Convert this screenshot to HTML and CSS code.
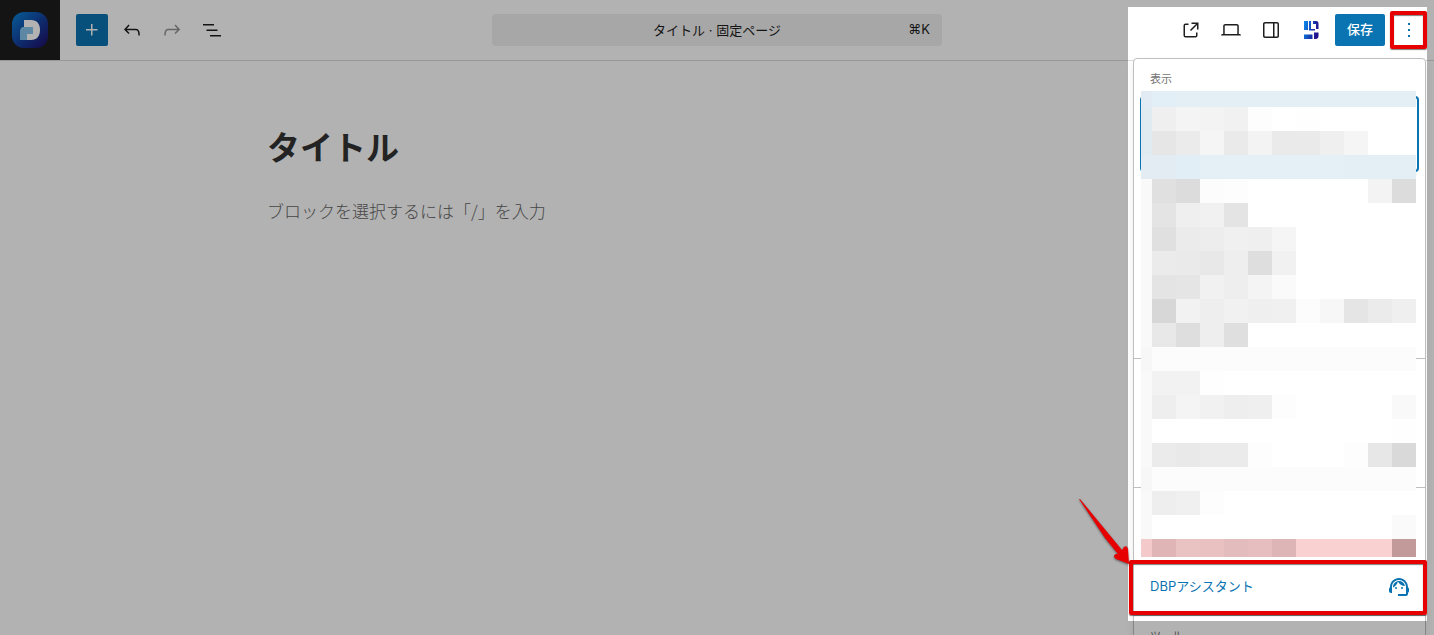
FILE: index.html
```html
<!DOCTYPE html>
<html lang="ja">
<head>
    <meta charset="UTF-8">
    <meta name="viewport" content="width=device-width, initial-scale=1.0">
    <title>タイトル</title>
    <link rel="stylesheet" href="styles.css">
</head>
<body>
    <div class="editor">
        <!-- Top toolbar -->
        <header class="header">
            <div class="header-left">
                <a class="site-logo" href="#" aria-label="Home">
                    <svg width="36" height="36" viewBox="0 0 36 36">
                        <defs>
                            <linearGradient id="logo-bg" x1="0" y1="0" x2="1" y2="1">
                                <stop offset="0" stop-color="#0a86d8"/>
                                <stop offset="0.5" stop-color="#1443a0"/>
                                <stop offset="1" stop-color="#220a66"/>
                            </linearGradient>
                        </defs>
                        <rect width="36" height="36" rx="12" fill="url(#logo-bg)"/>
                        <path d="M12 8h7c6 0 9 4 9 10s-3 10-9 10h-4v-6h6v-7h-9z" fill="#fff"/>
                        <path d="M12 15h9v7h-6v6H8v-8c0-3 1-5 4-5z" fill="#86c3ea"/>
                    </svg>
                </a>
                <div class="tools">
                    <button class="icon-btn primary" aria-label="Add">
                        <svg width="24" height="24" viewBox="0 0 24 24"><path d="M11 12.5V17.5H12.5V12.5H17.5V11H12.5V6H11V11H6V12.5H11Z"/></svg>
                    </button>
                    <button class="icon-btn" aria-label="Undo">
                        <svg width="24" height="24" viewBox="0 0 24 24"><path d="M18.3 11.7c-.6-.6-1.4-.9-2.3-.9H6.7l2.9-3.3-1.1-1-4.500 5L8.500 16l1-1-2.700-2.700H16c.5 0 .9.2 1.300.5 1 1 1 3.400 1 4.500v.3h1.500v-.2c0-1.500 0-4.300-1.500-5.700z"/></svg>
                    </button>
                    <button class="icon-btn" aria-label="Redo" disabled>
                        <svg width="24" height="24" viewBox="0 0 24 24"><path d="M15.600 6.500l-1.100 1 2.900 3.300H8c-.9 0-1.700.3-2.300.9-1.400 1.500-1.400 4.200-1.400 5.600v.2h1.500v-.3c0-1.100 0-3.500 1-4.500.3-.3.700-.5 1.300-.5h9.200L14.500 15l1.100 1.100 4.600-4.600-4.600-5z"/></svg>
                    </button>
                    <button class="icon-btn" aria-label="Document overview">
                        <svg width="24" height="24" viewBox="0 0 24 24"><path d="M3 6h11v1.500H3V6Zm3.500 5.500h11V13h-11v-1.500ZM21 17H10v1.500h11V17Z"/></svg>
                    </button>
                </div>
            </div>

            <button class="document-bar">
                <span></span>
                <span>タイトル · 固定ページ</span>
                <span class="shortcut">⌘K</span>
            </button>

            <div class="header-right">
                <button class="icon-btn" aria-label="View page">
                    <svg width="24" height="24" viewBox="0 0 24 24"><path d="M19.500 4.500h-7V6h4.440l-5.970 5.970 1.060 1.060L18 7.060v4.440h1.500v-7Zm-13 1a2 2 0 0 0-2 2v10a2 2 0 0 0 2 2h10a2 2 0 0 0 2-2v-3H17v3a.5.5 0 0 1-.5.5h-10a.5.5 0 0 1-.5-.5v-10a.5.5 0 0 1 .5-.5h3V5.500h-3Z"/></svg>
                </button>
                <button class="icon-btn" aria-label="Preview">
                    <svg width="24" height="24" viewBox="0 0 24 24"><path d="M20.500 16h-.7V8c0-1.100-.9-2-2-2H6.200c-1.100 0-2 .9-2 2v8h-.7c-.8 0-1.500.7-1.500 1.500h20c0-.8-.7-1.500-1.500-1.500zM5.700 8c0-.3.2-.5.500-.5h11.600c.3 0 .5.2.5.500v8H5.700V8z"/></svg>
                </button>
                <button class="icon-btn" aria-label="Settings">
                    <svg width="24" height="24" viewBox="0 0 24 24"><path fill-rule="evenodd" d="M18 4H6c-1.100 0-2 .9-2 2v12c0 1.100.9 2 2 2h12c1.100 0 2-.9 2-2V6c0-1.100-.9-2-2-2zm-4 14.500H6c-.3 0-.5-.2-.5-.5V6c0-.3.2-.5.5-.5h8v13zm4.500-.5c0 .3-.2.5-.5.5h-2.500v-13H18c.3 0 .5.2.5.5v12z"/></svg>
                </button>
                <button class="icon-btn" aria-label="Plugin settings">
                    <svg width="24" height="24" viewBox="0 0 24 24">
                        <defs>
                            <linearGradient id="mark" x1="0" y1="0" x2="1" y2="0.300">
                                <stop offset="0" stop-color="#0a8cf0"/>
                                <stop offset="0.6" stop-color="#1440b0"/>
                                <stop offset="1" stop-color="#22108c"/>
                            </linearGradient>
                        </defs>
                        <path fill="url(#mark)" d="M5 3h4v9H5zM10 3h2v8h4v1.500h-6zM14 3h3c2 0 2.500 1 2.500 3v5H17V6h-3zM5 16.500h8.500V21H5zM15 14.500h4.500V18c0 2-1 3-3 3H15z"/>
                    </svg>
                </button>
                <button class="save-btn">保存</button>
                <button class="icon-btn active" aria-label="Options">
                    <svg width="24" height="24" viewBox="0 0 24 24"><path d="M13 19h-2v-2h2v2zm0-6h-2v-2h2v2zm0-6h-2V5h2v2z"/></svg>
                </button>
            </div>
        </header>

        <!-- Canvas -->
        <main class="canvas">
            <h1>タイトル</h1>
            <p>ブロックを選択するには「/」を入力</p>
        </main>

        <!-- Options menu -->
        <div class="menu">
            <section class="group view">
                <h2>表示</h2>
                <button class="menu-item focused" aria-label="表示"></button>
            </section>
            <section class="group editor-mode"></section>
            <section class="group plugins">
                <button class="menu-item assistant">
                    <span>DBPアシスタント</span>
                    <svg width="24" height="24" viewBox="0 0 24 24" fill="currentColor">
                        <path d="M21 12.220C21 6.730 16.740 3 12 3c-4.690 0-9 3.650-9 9.280-.6.340-1 .980-1 1.720v2c0 1.100.9 2 2 2h1v-6.100c0-3.870 3.130-7 7-7s7 3.130 7 7V19h-8v2h8c1.100 0 2-.9 2-2v-1.220c.590-.310 1-.920 1-1.640v-2.300c0-.7-.410-1.310-1-1.620z"/>
                        <circle cx="9" cy="13" r="1"/>
                        <circle cx="15" cy="13" r="1"/>
                        <path d="M18 11.030C17.520 8.180 15.040 6 12.050 6c-3.030 0-6.290 2.510-6.030 6.450 2.470-1.010 4.330-3.210 4.860-5.890 1.310 2.630 4 4.440 7.120 4.470z"/>
                    </svg>
                </button>
            </section>
            <section class="group">
                <h2>ツール</h2>
            </section>
            <div class="mosaic" id="mosaic"></div>
        </div>

        <!-- Guide overlay -->
        <div class="spotlight"></div>
        <div class="frame frame-options"></div>
        <div class="frame frame-assistant"></div>
        <svg class="arrow" width="60" height="76" viewBox="0 0 60 76">
            <path d="M5 5L6 5L48 56L50 53Q53 51 54 55L55 70L42 65Q38 62 42 60L44 60L31 44Z"/>
        </svg>
    </div>

    <script>
        // One row per line: left edge column first, then eleven columns
        const rows = [
            'e2ebf3 e3eff6 e4eef5 e4eff5 e4eff5 e4eff5 e4eff5 e4eff5 e4eff5 e4eff5 e4eff5 e4eff5',
            'dfeaf1 efefef f4f4f4 f3f3f3 f1f1f1 fdfdfd ffffff fefefe ffffff ffffff ffffff ffffff',
            'dfeaf1 e6e6e6 ebebeb f5f5f5 eaeaea f3f3f3 eaeaea eaeaea efefef f5f5f5 ffffff ffffff',
            'e3ebf3 e3ebf3 e2eef5 e4f0f6 e4f0f6 e4f0f6 e4f0f6 e4f0f6 e4f0f6 e4eff5 e4eff5 e4eff5',
            'f9f9f9 e0e0e0 dcdcdc fcfcfc fdfdfd ffffff ffffff ffffff ffffff ffffff f3f3f3 dcdcdc',
            'f9f9f9 e4e4e4 efefef f1f1f1 e4e4e4 ffffff ffffff ffffff ffffff ffffff ffffff ffffff',
            'f9f9f9 e0e0e0 ebebeb ededed f0f0f0 efefef f5f5f5 ffffff ffffff ffffff ffffff ffffff',
            'f9f9f9 ebebeb eaeaea e8e8e8 eeeeee dedede f1f1f1 ffffff ffffff ffffff ffffff ffffff',
            'f9f9f9 e4e4e4 e5e5e5 f1f1f1 eeeeee f4f4f4 fafafa ffffff ffffff ffffff ffffff ffffff',
            'f9f9f9 d7d7d7 f2f2f2 eeeeee f1f1f1 efefef f0f0f0 fcfcfc f7f7f7 e5e5e5 ebebeb efefef',
            'f9f9f9 e8e8e8 dedede eeeeee dfdfdf ffffff ffffff ffffff ffffff ffffff ffffff ffffff',
            'f7f7f7 fcfcfc fcfcfc fcfcfc fcfcfc fcfcfc fcfcfc fcfcfc fcfcfc fcfcfc fcfcfc fcfcfc',
            'f9f9f9 f2f2f2 f2f2f2 fefefe ffffff ffffff ffffff ffffff ffffff ffffff ffffff ffffff',
            'f9f9f9 eeeeee f4f4f4 f1f1f1 eeeeee efefef fdfdfd ffffff ffffff ffffff ffffff f9f9f9',
            'f9f9f9 ffffff ffffff ffffff ffffff ffffff ffffff ffffff ffffff ffffff ffffff fefefe',
            'f9f9f9 ebebeb e9e9e9 ebebeb ebebeb fdfdfd ffffff ffffff ffffff fdfdfd e7e7e7 d9d9d9',
            'f7f7f7 fcfcfc fcfcfc fcfcfc fcfcfc fcfcfc fcfcfc fcfcfc fcfcfc fcfcfc fcfcfc fcfcfc',
            'f9f9f9 eeeeee f0f0f0 fdfdfd ffffff ffffff ffffff ffffff ffffff ffffff ffffff ffffff',
            'f9f9f9 ffffff ffffff ffffff ffffff ffffff ffffff ffffff ffffff ffffff ffffff fafafa',
            'f4c9ca dfb5b6 e9c2c2 e9c1c1 e3bcbd e6bebf deb5b6 f9d1d1 f9d1d1 f9d1d1 f9d1d1 c19a99'
        ];
        const mosaic = document.getElementById('mosaic');

        rows.join(' ').split(' ').forEach((color) => {
            const cell = document.createElement('span');
            cell.style.backgroundColor = '#' + color;
            mosaic.appendChild(cell);
        });
    </script>
</body>
</html>
```
FILE: styles.css
```css
* {
    box-sizing: border-box;
}

body {
    margin: 0;
    font-family: Inter, "Noto Sans CJK JP", sans-serif;
    font-size: 13px;
    color: #1e1e1e;
    background-color: #fff;
}

button {
    padding: 0;
    border: none;
    background: none;
    color: inherit;
    font: inherit;
    cursor: pointer;
}

.editor {
    position: relative;
    height: 100vh;
    overflow: hidden;
}

.header {
    display: grid;
    grid-template-columns: 1fr 450px 1fr;
    align-items: center;
    border-bottom: 1px solid #dadada;
}

.header-left,
.header-right,
.tools {
    display: flex;
    align-items: center;
}

.site-logo {
    display: flex;
    align-items: center;
    justify-content: center;
    width: 60px;
    height: 60px;
    background-color: #1e1e1e;
}

.tools {
    gap: 8px;
    padding-left: 16px;
}

.header-right {
    justify-content: flex-end;
    gap: 8px;
    padding-right: 9px;
}

.icon-btn {
    display: flex;
    align-items: center;
    justify-content: center;
    width: 32px;
    height: 32px;
    border-radius: 2px;
}

.icon-btn svg {
    fill: currentColor;
}

.icon-btn:disabled {
    color: #949494;
}

.icon-btn.active {
    color: #0a73b1;
}

.primary,
.save-btn {
    background-color: #0a73b1;
    color: #fff;
}

.save-btn {
    height: 32px;
    padding: 0 12px 4px;
    border-radius: 2px;
    font-weight: 500;
}

.document-bar {
    display: grid;
    grid-template-columns: 1fr auto 1fr;
    align-items: center;
    height: 32px;
    padding: 0 12px 2px;
    border-radius: 4px;
    background-color: #f0f0f0;
}

.shortcut {
    text-align: right;
}

.canvas {
    max-width: 900px;
    margin: 0 auto;
    padding-top: 61px;
    font-family: "Noto Sans CJK JP", sans-serif;
}

.canvas h1 {
    margin: 0 0 28px;
    font-size: 33px;
    line-height: 48px;
    color: #333;
}

.canvas p {
    margin: 0;
    font-size: 17px;
    font-weight: 300;
    line-height: 26px;
    color: #666;
}

/* Options menu */
.menu {
    position: absolute;
    top: 58px;
    right: 8px;
    width: 293px;
    border: 1px solid #bfbfbf;
    border-radius: 4px;
    background-color: #fff;
    box-shadow: 0 4px 8px rgba(0, 0, 0, 0.08);
}

.group {
    display: flex;
    flex-direction: column;
    padding: 8px 6px;
    border-bottom: 1px solid #bfbfbf;
}

.group h2 {
    margin: 0 0 5px;
    padding: 0 10px;
    font-size: 11px;
    font-weight: 400;
    line-height: 24px;
    color: #757575;
}

.view {
    min-height: 300px;
}

.editor-mode {
    min-height: 129px;
}

.plugins {
    min-height: 128px;
    justify-content: flex-end;
}

.menu-item {
    display: flex;
    align-items: center;
    justify-content: space-between;
    min-height: 40px;
    padding: 0 8px 0 10px;
    border-radius: 2px;
}

.menu-item span {
    padding-bottom: 4px;
}

.focused {
    min-height: 76px;
    border: 2px solid #0a73b1;
    border-radius: 4px;
}

.assistant {
    color: #0a73b1;
}

.mosaic {
    position: absolute;
    top: 32px;
    left: 7px;
    display: grid;
    grid-template-columns: 11px repeat(11, 24px);
    grid-template-rows: 16px repeat(18, 24px) 18px;
}

/* Guide overlay */
.spotlight {
    position: absolute;
    top: 7px;
    right: 7px;
    width: 299px;
    height: 614px;
    box-shadow: 0 0 0 3000px rgba(0, 0, 0, 0.3);
    pointer-events: none;
}

.frame {
    position: absolute;
    right: 7px;
    border: 4px solid #e60000;
    border-radius: 2px;
    box-shadow: 0 1px 1px rgba(0, 0, 0, 0.5), inset 0 1px 1px rgba(0, 0, 0, 0.5);
    pointer-events: none;
}

.frame-options {
    top: 11px;
    width: 37px;
    height: 38px;
}

.frame-assistant {
    top: 560px;
    width: 298px;
    height: 55px;
}

.arrow {
    position: absolute;
    top: 494px;
    right: 300px;
    fill: #e60000;
    filter: drop-shadow(0 1px 1px rgba(0, 0, 0, 0.5));
    pointer-events: none;
}
```
